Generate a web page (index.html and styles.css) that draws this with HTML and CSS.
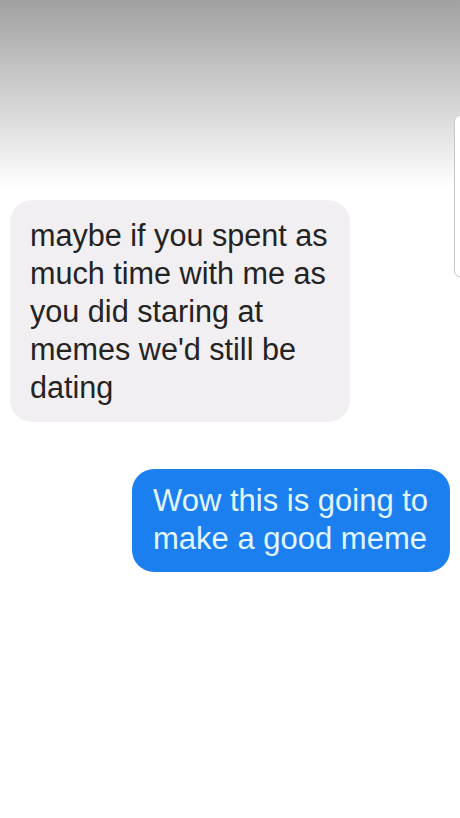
FILE: index.html
```html
<!DOCTYPE html>
<html lang="en">
<head>
<meta charset="utf-8">
<title>Chat</title>
<link rel="stylesheet" href="styles.css">
</head>
<body>
<div class="edge-card"></div>
<main class="thread">
  <div class="bubble received">maybe if you spent as<br>much time with me as<br>you did staring at<br>memes we'd still be<br>dating</div>
  <div class="bubble sent">Wow this is going to<br>make a good meme</div>
</main>
</body>
</html>
```
FILE: styles.css
```css
html {
  background: #ffffff;
}
body {
  margin: 0;
  width: 460px;
  height: 818px;
  position: relative;
  overflow: hidden;
  background: linear-gradient(to bottom, #a0a0a0 0px, #c4c4c4 70px, #e6e6e6 140px, #ffffff 188px, #ffffff 818px);
  font-family: "Liberation Sans", Arial, sans-serif;
}
.edge-card {
  position: absolute;
  left: 454px;
  top: 115px;
  width: 20px;
  height: 160px;
  border: 1px solid #c8c8c8;
  border-radius: 6px;
  background: #ffffff;
}
.thread {
  display: flex;
  flex-direction: column;
  padding: 200px 10px 0 10px;
  gap: 47px;
}
.bubble {
  line-height: 38px;
  border-radius: 22px;
  white-space: nowrap;
}
.received {
  align-self: flex-start;
  width: 300px;
  font-size: 30.6px;
  background: #f2eff2;
  color: #232323;
  padding: 16px 20px 16px 20px;
}
.sent {
  align-self: flex-end;
  font-size: 31px;
  background: #1b7ff0;
  color: #e2f6ff;
  padding: 13px 21px 14px 21px;
  width: 276px;
}
```
